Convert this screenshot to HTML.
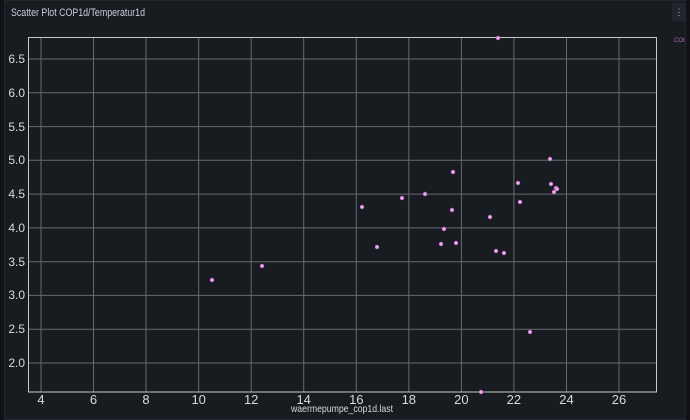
<!DOCTYPE html><html><head><style>
body{margin:0;width:690px;height:415px;background:#111217;overflow:hidden;font-family:"Liberation Sans",sans-serif}
.p{position:absolute;left:4px;top:0;width:682px;height:420px;background:#181b1f;border:1px solid #24272e;box-sizing:border-box}
</style></head><body><div class="p"></div>
<svg width="690" height="415" style="position:absolute;left:0;top:0" font-family="Liberation Sans, sans-serif">
<text x="11" y="16" fill="#ccccdc" font-size="11" textLength="134" lengthAdjust="spacingAndGlyphs">Scatter Plot COP1d/Temperatur1d</text>
<rect x="672" y="3" width="14" height="18" rx="2" fill="#22252b"/>
<text x="679" y="15" fill="#bbb" font-size="9" text-anchor="middle">⋮</text>
<text x="674" y="42" fill="#c061c8" font-size="6">COI</text>
<g stroke="#666a70" stroke-width="1">
<line x1="41" y1="37" x2="41" y2="392"/><line x1="93.5" y1="37" x2="93.5" y2="392"/><line x1="146" y1="37" x2="146" y2="392"/><line x1="198.7" y1="37" x2="198.7" y2="392"/><line x1="251.2" y1="37" x2="251.2" y2="392"/><line x1="303.7" y1="37" x2="303.7" y2="392"/><line x1="356.3" y1="37" x2="356.3" y2="392"/><line x1="408.8" y1="37" x2="408.8" y2="392"/><line x1="461.4" y1="37" x2="461.4" y2="392"/><line x1="513.9" y1="37" x2="513.9" y2="392"/><line x1="566.5" y1="37" x2="566.5" y2="392"/><line x1="619" y1="37" x2="619" y2="392"/>
<line x1="28" y1="59" x2="657" y2="59"/><line x1="28" y1="92.8" x2="657" y2="92.8"/><line x1="28" y1="126.6" x2="657" y2="126.6"/><line x1="28" y1="160.3" x2="657" y2="160.3"/><line x1="28" y1="194.1" x2="657" y2="194.1"/><line x1="28" y1="227.9" x2="657" y2="227.9"/><line x1="28" y1="261.7" x2="657" y2="261.7"/><line x1="28" y1="295.4" x2="657" y2="295.4"/><line x1="28" y1="329.2" x2="657" y2="329.2"/><line x1="28" y1="363" x2="657" y2="363"/>
</g>
<rect x="28.5" y="37.5" width="628" height="354.5" fill="none" stroke="#c8c8c8" stroke-width="1"/>
<g fill="#d8d9da" font-size="12" text-anchor="end">
<text x="25" y="63">6.5</text><text x="25" y="97">6.0</text><text x="25" y="131">5.5</text><text x="25" y="164">5.0</text><text x="25" y="198">4.5</text><text x="25" y="232">4.0</text><text x="25" y="266">3.5</text><text x="25" y="299">3.0</text><text x="25" y="333">2.5</text><text x="25" y="367">2.0</text>
</g>
<g fill="#d8d9da" font-size="13" text-anchor="middle">
<text x="41" y="404">4</text><text x="93.5" y="404">6</text><text x="146" y="404">8</text><text x="198.7" y="404">10</text><text x="251.2" y="404">12</text><text x="303.7" y="404">14</text><text x="356.3" y="404">16</text><text x="408.8" y="404">18</text><text x="461.4" y="404">20</text><text x="513.9" y="404">22</text><text x="566.5" y="404">24</text><text x="619" y="404">26</text>
</g>
<text x="291" y="412" fill="#d8d9da" font-size="10.5" textLength="102" lengthAdjust="spacingAndGlyphs">waermepumpe_cop1d.last</text>
<g fill="#f0a8f0" stroke="#b060b8" stroke-width="0.6">
<circle cx="498" cy="38" r="1.9"/><circle cx="212" cy="280" r="1.9"/><circle cx="262" cy="266" r="1.9"/><circle cx="362" cy="207" r="1.9"/><circle cx="377" cy="247" r="1.9"/><circle cx="402" cy="198" r="1.9"/><circle cx="425" cy="194" r="1.9"/><circle cx="453" cy="172" r="1.9"/><circle cx="444" cy="229" r="1.9"/><circle cx="452" cy="210" r="1.9"/><circle cx="441" cy="244" r="1.9"/><circle cx="456" cy="243" r="1.9"/><circle cx="490" cy="217" r="1.9"/><circle cx="496" cy="251" r="1.9"/><circle cx="504" cy="253" r="1.9"/><circle cx="518" cy="183" r="1.9"/><circle cx="520" cy="202" r="1.9"/><circle cx="550" cy="159" r="1.9"/><circle cx="551" cy="184" r="1.9"/><circle cx="556" cy="188" r="1.9"/><circle cx="554" cy="192" r="1.9"/><circle cx="557" cy="189" r="1.9"/><circle cx="530" cy="332" r="1.9"/><circle cx="481" cy="392" r="1.9"/>
</g>
</svg></body></html>
